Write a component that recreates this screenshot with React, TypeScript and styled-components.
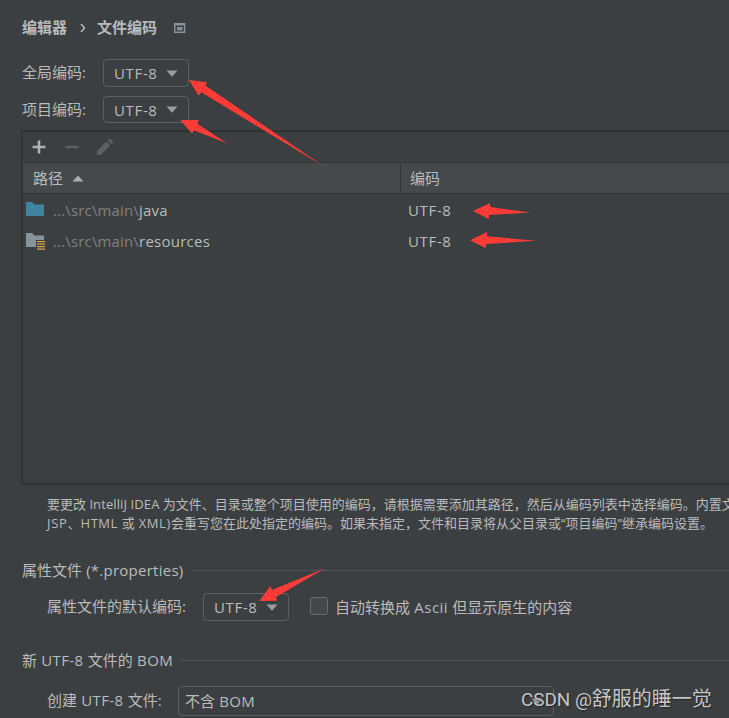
import React from "react";
import styled, { createGlobalStyle } from "styled-components";

const GlobalStyle = createGlobalStyle`
  * { box-sizing: border-box; }
  html, body { margin: 0; background: #3c3f41; overflow: hidden; }
`;

const Page = styled.main`
  position: relative;
  width: 729px;
  height: 718px;
  overflow: hidden;
  background: #3c3f41;
  color: #bbbbbb;
  font: 15px/20px "Open Sans", "Noto Sans CJK SC", sans-serif;
  white-space: nowrap;
`;

const Run = styled.span<{ $track?: number; $dim?: boolean }>`
  letter-spacing: ${(p) => p.$track ?? 0}px;
  color: ${(p) => (p.$dim ? "#808080" : "inherit")};
`;

const Breadcrumb = styled.header`
  display: flex;
  align-items: center;
  height: 20px;
  margin: 18px 0 0 22px;
  font-weight: 700;
  svg { display: block; }
  span { padding-bottom: 2px; }
`;
const Chevron = styled.svg`
  margin: 0 11px 0 13px;
`;
const PageIcon = styled.svg`
  margin-left: 17px;
`;

const FieldRow = styled.div<{ $top: number; $indent: number; $height?: number }>`
  display: flex;
  align-items: center;
  height: ${(p) => p.$height ?? 28}px;
  margin: ${(p) => p.$top}px 0 0 ${(p) => p.$indent}px;
`;
const Label = styled.label<{ $width: number }>`
  width: ${(p) => p.$width}px;
  flex: none;
  padding-bottom: 2px;
`;
const Combo = styled.div<{ $width: number; $pad: number }>`
  display: flex;
  align-items: center;
  justify-content: space-between;
  flex: none;
  width: ${(p) => p.$width}px;
  height: 100%;
  padding: 0 10px 0 ${(p) => p.$pad}px;
  border: 1.5px solid #5e6060;
  border-radius: 4px;
`;
const CheckBox = styled.span`
  width: 18px;
  height: 18px;
  margin: 0 7px 2px 21px;
  border: 1.5px solid #6b6b6b;
  border-radius: 3px;
  background: #43494a;
`;

const Panel = styled.section`
  height: 355px;
  margin: 7px 0 0 21px;
  border: solid #323232;
  border-width: 2px 0 2px 2px;
`;
const Toolbar = styled.div`
  display: flex;
  align-items: center;
  gap: 15px;
  height: 30px;
  padding-left: 7px;
`;
const HeadRow = styled.div`
  display: grid;
  grid-template-columns: 377px 1fr;
  align-items: center;
  height: 32px;
  border: solid #323435;
  border-width: 1px 0;
  background: #45494b;
`;
const HeadCell = styled.div<{ $divided?: boolean }>`
  display: flex;
  align-items: center;
  height: 28px;
  gap: 9px;
  padding-left: ${(p) => (p.$divided ? 9 : 10)}px;
  border-left: ${(p) => (p.$divided ? "1px solid #323435" : "0")};
`;
const DataRow = styled.div`
  display: grid;
  grid-template-columns: 26px 359px 1fr;
  align-items: center;
  height: 31px;
  svg { display: block; margin: 0 0 1px 2px; }
`;

const Note = styled.p`
  margin: 10px 0 0 47px;
  font-size: 13px;
  line-height: 19px;
`;
const SectionTitle = styled.h2<{ $top: number }>`
  display: flex;
  align-items: center;
  height: 20px;
  margin: ${(p) => p.$top}px 0 0 22px;
  font: inherit;
  > span { padding-bottom: 2px; }
  &::after {
    content: "";
    flex: 1;
    height: 1px;
    margin: 0 0 2px 7px;
    background: #515456;
  }
`;

const Arrows = styled.svg`
  position: absolute;
  inset: 0;
  pointer-events: none;
`;
const Watermark = styled.div`
  position: absolute;
  left: 521px;
  top: 685px;
  font: 400 20px/26px "Noto Sans CJK SC", sans-serif;
  color: #c4c5c6;
  text-shadow: 1px 1px 1px #222426;
`;
const WatermarkLatin = styled.span`
  font: 400 19px/26px Roboto, sans-serif;
  letter-spacing: -0.1px;
`;

const Triangle = ({ up = false }: { up?: boolean }) => (
  <svg width="12" height="7" viewBox="0 0 12 7">
    <path d={up ? "M0.5 6.5 6 0.5 11.5 6.5Z" : "M0.5 0.5H11.5L6 6.8Z"} fill={up ? "#adadad" : "#9a9da0"} />
  </svg>
);

const Folder = ({ resources = false }: { resources?: boolean }) => (
  <svg width="21" height="20" viewBox="0 0 21 20">
    <path d="M1 3H7.2L9.4 5.4H19V17H1Z" fill={resources ? "#87939a" : "#3e86a0"} />
    {resources && (
      <>
        <path d="M11 10H21V20H11Z" fill="#3c3f41" />
        <path d="M12 11.6H20M12 14.1H20M12 16.6H20M12 19.1H20" stroke="#d9a343" strokeWidth="1.3" />
      </>
    )}
  </svg>
);

const EncodingCombo = () => (
  <Combo $width={86} $pad={10}>
    <Run $track={0.65}>UTF-8</Run>
    <Triangle />
  </Combo>
);

const entries = [
  { name: "java", resources: false },
  { name: "resources", resources: true },
];

export default function App() {
  return (
    <Page>
      <GlobalStyle />
      <Breadcrumb>
        <Run>编辑器</Run>
        <Chevron width="6" height="10" viewBox="0 0 6 10">
          <path d="M1 1 4.6 5 1 9" fill="none" stroke="#bbbbbb" strokeWidth="1.4" />
        </Chevron>
        <Run>文件编码</Run>
        <PageIcon width="12" height="10" viewBox="0 0 12 10">
          <path d="M0 0H11.3V10H0Z M1.4 2.6V8.6H9.9V2.6Z" fillRule="evenodd" fill="#87939a" />
          <path d="M3 4H8.4V7.3H3Z" fill="#87939a" />
        </PageIcon>
      </Breadcrumb>

      <FieldRow $top={21} $indent={22}>
        <Label $width={81}>全局编码:</Label>
        <EncodingCombo />
      </FieldRow>
      <FieldRow $top={9} $indent={22} $height={27}>
        <Label $width={81}>项目编码:</Label>
        <EncodingCombo />
      </FieldRow>

      <Panel>
        <Toolbar>
          <svg width="18" height="18" viewBox="0 0 18 18">
            <path d="M9 2.6V15.4M2.6 9H15.4" stroke="#afb1b3" strokeWidth="2.5" />
          </svg>
          <svg width="18" height="18" viewBox="0 0 18 18">
            <path d="M2.5 9H15.5" stroke="#5d5f60" strokeWidth="2.2" />
          </svg>
          <svg width="18" height="18" viewBox="0 0 18 18">
            <path d="M0.8 13.2 10.4 3.6 14.2 7.4 4.6 17H0.8ZM11.5 2.5 13.1 0.9Q13.8 0.4 14.5 0.9L17 3.4Q17.6 4 17 4.7L15.3 6.3Z" fill="#5d5f60" />
          </svg>
        </Toolbar>
        <HeadRow>
          <HeadCell>
            路径 <Triangle up />
          </HeadCell>
          <HeadCell $divided>编码</HeadCell>
        </HeadRow>
        {entries.map((e) => (
          <DataRow key={e.name}>
            <Folder resources={e.resources} />
            <span>
              <Run $dim $track={0.15}>&nbsp;...\src\main\</Run>
              <Run $track={0.25}>{e.name}</Run>
            </span>
            <Run $track={0.65}>UTF-8</Run>
          </DataRow>
        ))}
      </Panel>

      <Note>
        要更改 <Run $track={0.1}>IntelliJ IDEA</Run> 为文件、目录或整个项目使用的编码，请根据需要添加其路径，然后从编码列表中选择编码。内置文
        <br />
        <Run $track={0.7}>JSP</Run>、<Run $track={0.5}>HTML </Run>或<Run $track={0.6}> XML)</Run>
        会重写您在此处指定的编码。如果未指定，文件和目录将从父目录或“项目编码”继承编码设置。
      </Note>

      <SectionTitle $top={28}>
        <Run>
          属性文件<Run $track={0.25}> (*.properties)</Run>
        </Run>
      </SectionTitle>
      <FieldRow $top={12} $indent={47}>
        <Label $width={156}>属性文件的默认编码:</Label>
        <EncodingCombo />
        <CheckBox />
        <Run>
          自动转换成<Run $track={0.45}> Ascii </Run>但显示原生的内容
        </Run>
      </FieldRow>

      <SectionTitle $top={30}>
        <Run>
          新<Run $track={0.38}> UTF-8 </Run>文件的<Run $track={0.38}> BOM</Run>
        </Run>
      </SectionTitle>
      <FieldRow $top={15} $indent={47} $height={30}>
        <Label $width={131}>
          创建<Run $track={0.38}> UTF-8 </Run>文件:
        </Label>
        <Combo $width={376} $pad={6}>
          <Run>
            不含<Run $track={0.35}> BOM</Run>
          </Run>
          <Triangle />
        </Combo>
      </FieldRow>

      <Arrows width="729" height="718" viewBox="0 0 729 718" fill="#ff3b38">
        <path d="M189 80 207 82.3 205.3 85.5 324 166.5 201.3 92.3 198.7 95.7Z" />
        <path d="M180.3 120H198.7L197.3 123.7 227 143.3 194.3 130.5 191.7 133.3Z" />
        <path d="M473 211 490 203 490.3 207 530 212.6 489 215 488.7 219Z" />
        <path d="M470 240.3 487 232V236.3L536 240.7 486.3 244 485.7 248Z" />
        <path d="M259.3 601 270.3 586 272 590 325 568.3 276 597 277 600.7Z" />
      </Arrows>
      <Watermark>
        <WatermarkLatin>CSDN @</WatermarkLatin>舒服的睡一觉
      </Watermark>
    </Page>
  );
}
